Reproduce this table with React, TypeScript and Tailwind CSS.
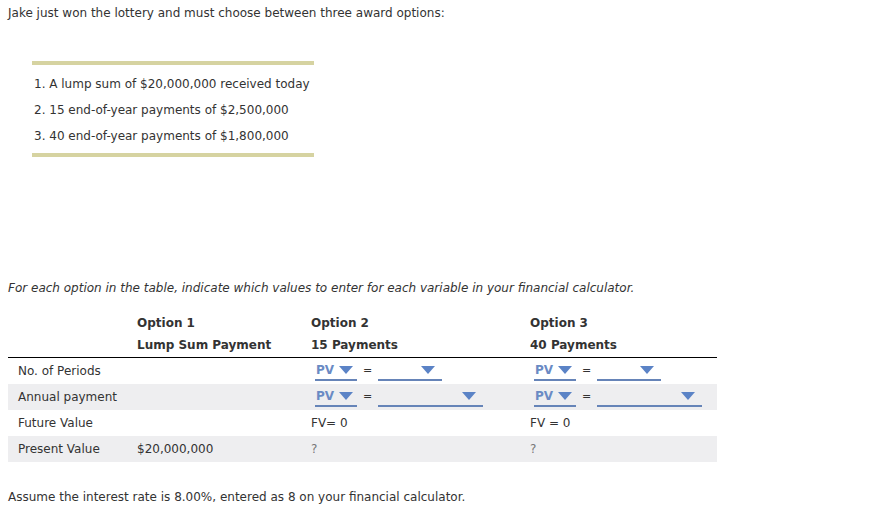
import React from "react";

const rows = [
    { label: "No. of Periods", opt1: "", kind: "short" },
    { label: "Annual payment", opt1: "", kind: "long" },
    { label: "Future Value", opt1: "", kind: "fv" },
    { label: "Present Value", opt1: "$20,000,000", kind: "pv" },
];

function Arrow() {
    return (
        <svg width="14" height="8" viewBox="0 0 14 8" className="shrink-0">
            <path d="M0 0 L14 0 L7 8 Z" fill="#5b83c6" />
        </svg>
    );
}

function PvSelect() {
    return (
        <div className="flex items-center gap-[5px] w-[42px] h-[20px] border-b-2 border-[#6684b8] pl-[1px]">
            <span className="text-[12px] font-bold text-[#6a8ac4]">PV</span>
            <Arrow />
        </div>
    );
}

function BlankSelect({ width }: { width: string }) {
    return (
        <div className={`flex items-center justify-end h-[20px] border-b-2 border-[#6684b8] pr-[7px] ${width}`}>
            <Arrow />
        </div>
    );
}

function Cell({ kind, fv }: { kind: string; fv: string }) {
    if (kind === "short" || kind === "long") {
        return (
            <div className="flex items-center">
                <div className="ml-[4px]">
                    <PvSelect />
                </div>
                <span className="mx-[6px] text-[11px]">=</span>
                <BlankSelect width={kind === "short" ? "w-[64px]" : "w-[105px]"} />
            </div>
        );
    }
    if (kind === "fv") return <span>{fv}</span>;
    return <span className="text-[#777]">?</span>;
}

export default function App() {
    return (
        <div className="w-[887px] h-[528px] bg-white text-[#333] text-[12px] font-['DejaVu_Sans',Verdana,sans-serif] px-[8px] pt-[4px] overflow-hidden">
            <p className="leading-[18px]">Jake just won the lottery and must choose between three award options:</p>

            <div className="ml-[24px] mt-[39px] w-[282px] border-t-4 border-b-4 border-[#d6d3a1] pt-[10px] pb-[8px]">
                <ol className="pl-[2px] flex flex-col gap-[8px]">
                    <li className="leading-[18px]">1. A lump sum of $20,000,000 received today</li>
                    <li className="leading-[18px]">2. 15 end-of-year payments of $2,500,000</li>
                    <li className="leading-[18px]">3. 40 end-of-year payments of $1,800,000</li>
                </ol>
            </div>

            <p className="mt-[122px] italic leading-[18px]">For each option in the table, indicate which values to enter for each variable in your financial calculator.</p>

            <div className="mt-[17px] w-[709px]">
                <div className="flex font-bold border-b border-black pb-[3px]">
                    <div className="w-[129px]" />
                    <div className="w-[174px] flex flex-col gap-[4px] leading-[18px]">
                        <span>Option 1</span>
                        <span>Lump Sum Payment</span>
                    </div>
                    <div className="w-[219px] flex flex-col gap-[4px] leading-[18px]">
                        <span>Option 2</span>
                        <span>15 Payments</span>
                    </div>
                    <div className="flex flex-col gap-[4px] leading-[18px]">
                        <span>Option 3</span>
                        <span>40 Payments</span>
                    </div>
                </div>
                {rows.map((r, i) => (
                    <div key={r.label} className={`flex items-center h-[26px] ${i % 2 === 1 ? "bg-[#eeeef0]" : ""}`}>
                        <div className="w-[129px] pl-[10px]">{r.label}</div>
                        <div className="w-[174px]">{r.opt1}</div>
                        <div className="w-[219px]">
                            <Cell kind={r.kind} fv="FV= 0" />
                        </div>
                        <div className="flex-1">
                            <Cell kind={r.kind} fv="FV = 0" />
                        </div>
                    </div>
                ))}
            </div>

            <p className="mt-[26px] leading-[18px]">Assume the interest rate is 8.00%, entered as 8 on your financial calculator.</p>
        </div>
    );
}
